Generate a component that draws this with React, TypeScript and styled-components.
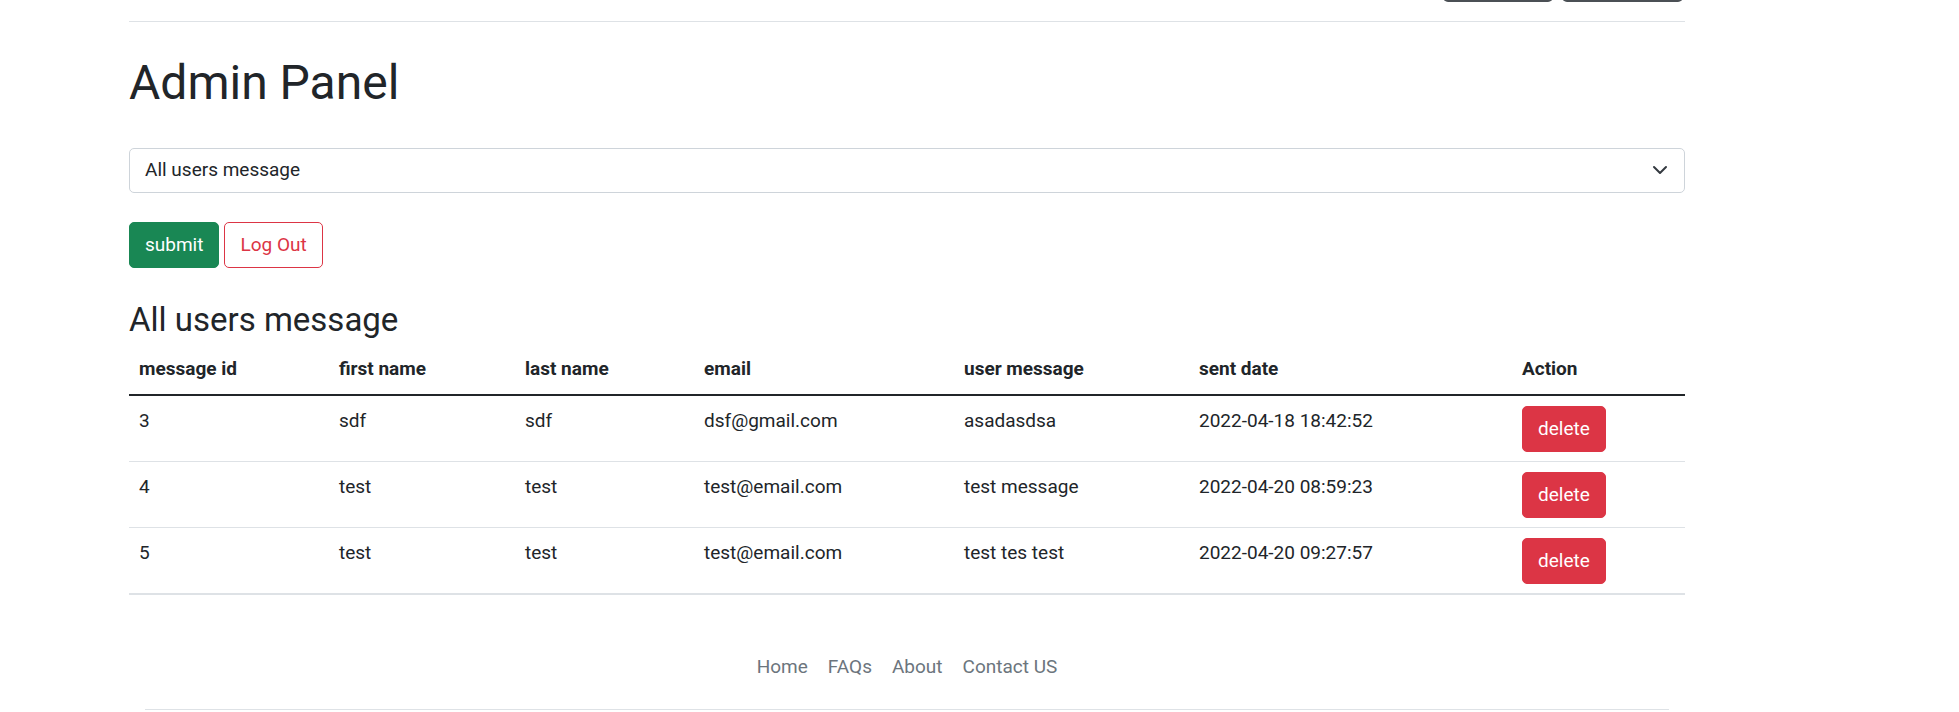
import React from "react";
import styled, { createGlobalStyle } from "styled-components";

const FONT = `Roboto, "Noto Sans", sans-serif`;

const GlobalStyle = createGlobalStyle`
  html, body {
    margin: 0;
    padding: 0;
    background: #fff;
  }
  body {
    font-family: ${FONT};
    font-size: 19px;
    line-height: 30px;
    color: #212529;
  }
`;

interface IMessage {
  id: number;
  firstName: string;
  lastName: string;
  email: string;
  message: string;
  sent: string;
}

const messages: IMessage[] = [
  { id: 3, firstName: "sdf", lastName: "sdf", email: "dsf@gmail.com", message: "asadasdsa", sent: "2022-04-18 18:42:52" },
  { id: 4, firstName: "test", lastName: "test", email: "test@email.com", message: "test message", sent: "2022-04-20 08:59:23" },
  { id: 5, firstName: "test", lastName: "test", email: "test@email.com", message: "test tes test", sent: "2022-04-20 09:27:57" },
];

const columns = [
  { title: "message id", width: 200 },
  { title: "first name", width: 186 },
  { title: "last name", width: 179 },
  { title: "email", width: 260 },
  { title: "user message", width: 235 },
  { title: "sent date", width: 323 },
  { title: "Action", width: 173 },
];

const App = () => {
  return (
    <>
      <GlobalStyle />
      <Page>
        <TopBar>
          <NavButton $width={110} aria-label="Login" />
          <NavButton $width={121} aria-label="Sign Up" />
        </TopBar>
        <Title>Admin Panel</Title>
        <Select>
          <span>All users message</span>
          <svg width="16" height="16" viewBox="0 0 16 16" fill="none">
            <path d="M2 5l6 6 6-6" stroke="#343a40" strokeWidth="2" strokeLinecap="round" strokeLinejoin="round" />
          </svg>
        </Select>
        <Actions>
          <Button $variant="success">submit</Button>
          <Button $variant="outline-danger">Log Out</Button>
        </Actions>
        <SubTitle>All users message</SubTitle>
        <Table>
          <colgroup>
            {columns.map((c) => (
              <col key={c.title} style={{ width: c.width }} />
            ))}
          </colgroup>
          <thead>
            <tr>
              {columns.map((c) => (
                <Th key={c.title}>{c.title}</Th>
              ))}
            </tr>
          </thead>
          <tbody>
            {messages.map((item, i) => (
              <Row key={item.id} $last={i === messages.length - 1}>
                <Td>{item.id}</Td>
                <Td>{item.firstName}</Td>
                <Td>{item.lastName}</Td>
                <Td>{item.email}</Td>
                <Td>{item.message}</Td>
                <Td>{item.sent}</Td>
                <Td>
                  <Button $variant="danger">delete</Button>
                </Td>
              </Row>
            ))}
          </tbody>
        </Table>
        <Footer>
          <FooterNav>
            <FooterLink href="#">Home</FooterLink>
            <FooterLink href="#">FAQs</FooterLink>
            <FooterLink href="#">About</FooterLink>
            <FooterLink href="#">Contact US</FooterLink>
          </FooterNav>
        </Footer>
      </Page>
    </>
  );
};

export default App;

const Page = styled.div`
  width: 1556px;
  margin-left: 129px;
`;

const TopBar = styled.div`
  display: flex;
  justify-content: flex-end;
  align-items: flex-start;
  gap: 9px;
  height: 21px;
  padding-right: 2px;
  border-bottom: 1px solid #dee2e6;
`;

const NavButton = styled.button<{ $width: number }>`
  width: ${(p) => p.$width}px;
  height: 46px;
  margin-top: -44px;
  border: none;
  border-radius: 5px;
  background: #4b5055;
`;

const Title = styled.h1`
  margin: 32px 0 0;
  font-size: 48px;
  font-weight: 400;
  line-height: 1.2;
`;

const Select = styled.div`
  display: flex;
  align-items: center;
  justify-content: space-between;
  box-sizing: border-box;
  height: 45px;
  margin-top: 36px;
  padding: 0 16px 0 15px;
  border: 1px solid #ced4da;
  border-radius: 5px;

  svg {
    width: 16px;
    height: 16px;
  }
`;

const Actions = styled.div`
  display: flex;
  gap: 5px;
  margin-top: 29px;
`;

const Button = styled.button<{ $variant: "success" | "danger" | "outline-danger" }>`
  box-sizing: border-box;
  height: 46px;
  padding: 0 15px;
  border-radius: 5px;
  font-family: ${FONT};
  font-size: 19px;
  line-height: 30px;
  cursor: pointer;
  border: 1px solid ${(p) => (p.$variant === "success" ? "#198754" : "#dc3545")};
  background: ${(p) =>
    p.$variant === "success" ? "#198754" : p.$variant === "danger" ? "#dc3545" : "#fff"};
  color: ${(p) => (p.$variant === "outline-danger" ? "#dc3545" : "#fff")};
`;

const SubTitle = styled.h2`
  margin: 32px 0 5px;
  font-size: 33px;
  font-weight: 400;
  line-height: 1.2;
`;

const Table = styled.table`
  width: 100%;
  border-collapse: collapse;
  table-layout: fixed;
`;

const Th = styled.th`
  padding: 10px;
  text-align: left;
  font-weight: 700;
  border-bottom: 2.5px solid #212529;
`;

const Row = styled.tr<{ $last: boolean }>`
  border-bottom: ${(p) => (p.$last ? "2px" : "1px")} solid #dee2e6;
`;

const Td = styled.td`
  padding: 10px 10px 9px;
  vertical-align: top;
`;

const Footer = styled.footer`
  padding: 20px 16px 0;
  margin-top: 27px;
`;

const FooterNav = styled.nav`
  display: flex;
  justify-content: center;
  padding-bottom: 17px;
  border-bottom: 1px solid #dee2e6;
`;

const FooterLink = styled.a`
  padding: 10px;
  color: #6c757d;
  text-decoration: none;
`;
